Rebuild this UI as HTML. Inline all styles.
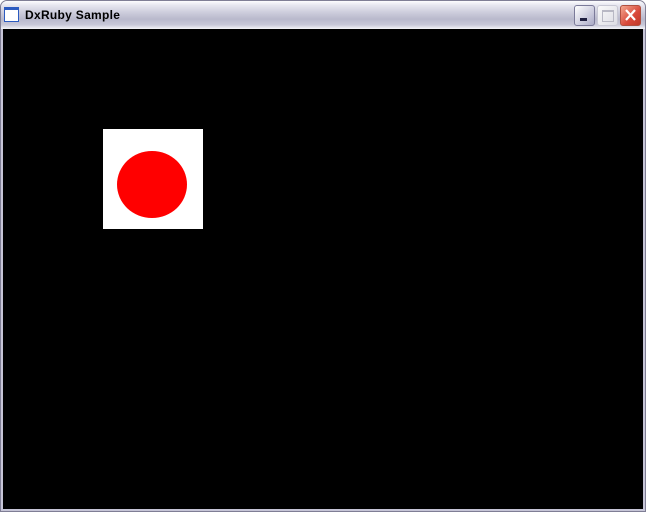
<!DOCTYPE html>
<html><head><meta charset="utf-8"><style>
html,body{margin:0;padding:0;width:646px;height:512px;overflow:hidden;background:#fff}
.win{position:absolute;left:0;top:0;width:646px;height:512px;background:#c6c5d7;border-radius:7px 7px 0 0;box-sizing:border-box;border:1px solid #7f7e95}
.tb{position:absolute;left:0;top:0;width:644px;height:28px;border-radius:6px 6px 0 0;background:linear-gradient(#fdfdfe 0%,#e6e6ef 15%,#c9c9d9 45%,#b9b9cc 65%,#c8c8d8 85%,#f4f4f8 100%)}
.title{position:absolute;left:24px;top:7px;font:bold 12px "Liberation Sans",sans-serif;color:#000;letter-spacing:0.3px}
.ico{position:absolute;left:3px;top:6px;width:13px;height:11px;border:1px solid #2c5bc0;border-top:3px solid #2c5bc0;background:#fff}
.btn{position:absolute;top:4px;width:21px;height:21px;border-radius:3px;box-sizing:border-box}
.mn{left:573px;border:1px solid #7b7a99;background:linear-gradient(135deg,#fff,#c4c4d8 70%,#a8a8c4)}
.mx{left:596px;border:1px solid #c8c8d4;background:linear-gradient(135deg,#fafafa,#dcdce4)}
.cl{left:619px;border:1px solid #b05040;background:linear-gradient(135deg,#f3a890,#d8483a 60%,#c03828)}
.client{position:absolute;left:2px;top:28px;width:640px;height:480px;background:#000}
</style></head><body>
<div class="win">
<div class="tb">
<div class="ico"></div>
<div class="title">DxRuby Sample</div>
<div class="btn mn"><div style="position:absolute;left:5px;top:12px;width:7px;height:3px;background:#202040"></div></div>
<div class="btn mx"><div style="position:absolute;left:4px;top:4px;width:10px;height:9px;border:1px solid #b8b8c4;border-top:2px solid #b8b8c4"></div></div>
<div class="btn cl"><svg width="19" height="19" style="position:absolute;left:0;top:0"><path d="M5 4L14 14M14 4L5 14" stroke="#fff" stroke-width="2.2"/></svg></div>
</div>
<div class="client">
<svg width="640" height="480" style="position:absolute;left:0;top:0">
<rect x="100" y="100" width="100" height="100" fill="#fff"/>
<ellipse cx="149" cy="155.5" rx="35" ry="33.5" fill="#f00"/>
</svg>
</div>
</div>
</body></html>
